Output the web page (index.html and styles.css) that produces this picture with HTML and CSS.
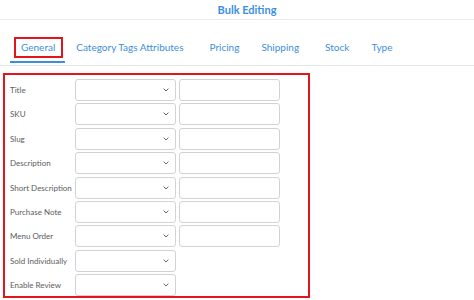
FILE: index.html
```html
<!DOCTYPE html>
<html lang="en">
<head>
    <meta charset="UTF-8">
    <meta name="viewport" content="width=device-width, initial-scale=1.0">
    <title>Bulk Editing</title>
    <link rel="stylesheet" href="styles.css">
</head>
<body>

<div class="header">
    <h2>Bulk Editing</h2>
</div>

<ul class="tabs">
    <li class="tab active"><span class="mark"></span>General</li>
    <li class="tab wide">Category Tags Attributes</li>
    <li class="tab">Pricing</li>
    <li class="tab wide">Shipping</li>
    <li class="tab">Stock</li>
    <li class="tab">Type</li>
</ul>

<div class="fields">
    <label>Title</label>
    <div class="pick"><select></select><svg viewBox="0 0 6 4"><path d="M0.6 0.6 L3 3 L5.4 0.6"/></svg></div>
    <input type="text">

    <label>SKU</label>
    <div class="pick"><select></select><svg viewBox="0 0 6 4"><path d="M0.6 0.6 L3 3 L5.4 0.6"/></svg></div>
    <input type="text">

    <label>Slug</label>
    <div class="pick"><select></select><svg viewBox="0 0 6 4"><path d="M0.6 0.6 L3 3 L5.4 0.6"/></svg></div>
    <input type="text">

    <label>Description</label>
    <div class="pick"><select></select><svg viewBox="0 0 6 4"><path d="M0.6 0.6 L3 3 L5.4 0.6"/></svg></div>
    <input type="text">

    <label>Short Description</label>
    <div class="pick"><select></select><svg viewBox="0 0 6 4"><path d="M0.6 0.6 L3 3 L5.4 0.6"/></svg></div>
    <input type="text">

    <label>Purchase Note</label>
    <div class="pick"><select></select><svg viewBox="0 0 6 4"><path d="M0.6 0.6 L3 3 L5.4 0.6"/></svg></div>
    <input type="text">

    <label>Menu Order</label>
    <div class="pick"><select></select><svg viewBox="0 0 6 4"><path d="M0.6 0.6 L3 3 L5.4 0.6"/></svg></div>
    <input type="text">

    <label>Sold Individually</label>
    <div class="pick"><select></select><svg viewBox="0 0 6 4"><path d="M0.6 0.6 L3 3 L5.4 0.6"/></svg></div>
    <span></span>

    <label>Enable Review</label>
    <div class="pick"><select></select><svg viewBox="0 0 6 4"><path d="M0.6 0.6 L3 3 L5.4 0.6"/></svg></div>
    <span></span>
</div>

</body>
</html>
```

FILE: styles.css
```css
/* Bulk editing panel */
body {
    font-family: Lato, "Open Sans", sans-serif;
    margin: 0;
    background: #fff;
    color: #555;
    overflow: hidden;
}
.header {
    height: 19px;
    border-bottom: 1px solid #e8ecef;
    display: flex;
    justify-content: center;
    align-items: center;
}
.header h2 {
    margin: 0;
    font-size: 11px;
    font-weight: 700;
    color: #3a8ee6;
    padding-left: 20px;
}
.tabs {
    list-style: none;
    margin: 0;
    padding: 0 0 0 10px;
    display: flex;
    border-bottom: 1px solid #e3e8ec;
    height: 45px;
}
.tab {
    position: relative;
    padding: 13px 11px 0;
    display: flex;
    align-items: center;
    height: 43px;
    box-sizing: border-box;
    font-size: 10px;
    color: #3d8fdc;
    border-bottom: 2px solid transparent;
}
.tab.wide {
    padding-right: 15px;
}
.tab.active {
    border-bottom-color: #3d8fdc;
    padding-right: 10px;
}
.mark {
    position: absolute;
    left: 4px;
    right: 2px;
    top: 17px;
    height: 21px;
    border: 2px solid #e3151c;
    box-sizing: border-box;
}
.fields {
    margin: 7px 0 0 3px;
    width: 307px;
    box-sizing: border-box;
    border: 2px solid #e3151c;
    padding: 4px 0 0 5px;
    display: grid;
    grid-template-columns: 62px 101px 101px;
    grid-auto-rows: 22px;
    column-gap: 3px;
    row-gap: 2.4px;
}
.fields label {
    font-size: 8px;
    color: #5c5c5c;
    display: flex;
    align-items: center;
    white-space: nowrap;
}
.pick {
    position: relative;
}
select, input {
    width: 100%;
    height: 22px;
    box-sizing: border-box;
    border: 1px solid #cfd3d6;
    border-radius: 3px;
    background: #fff;
    margin: 0;
    padding: 0 4px;
    appearance: none;
    -webkit-appearance: none;
    display: block;
}
.pick svg {
    position: absolute;
    right: 7px;
    top: 9px;
    width: 6px;
    height: 4px;
    fill: none;
    stroke: #666;
    stroke-width: 1;
}
```
